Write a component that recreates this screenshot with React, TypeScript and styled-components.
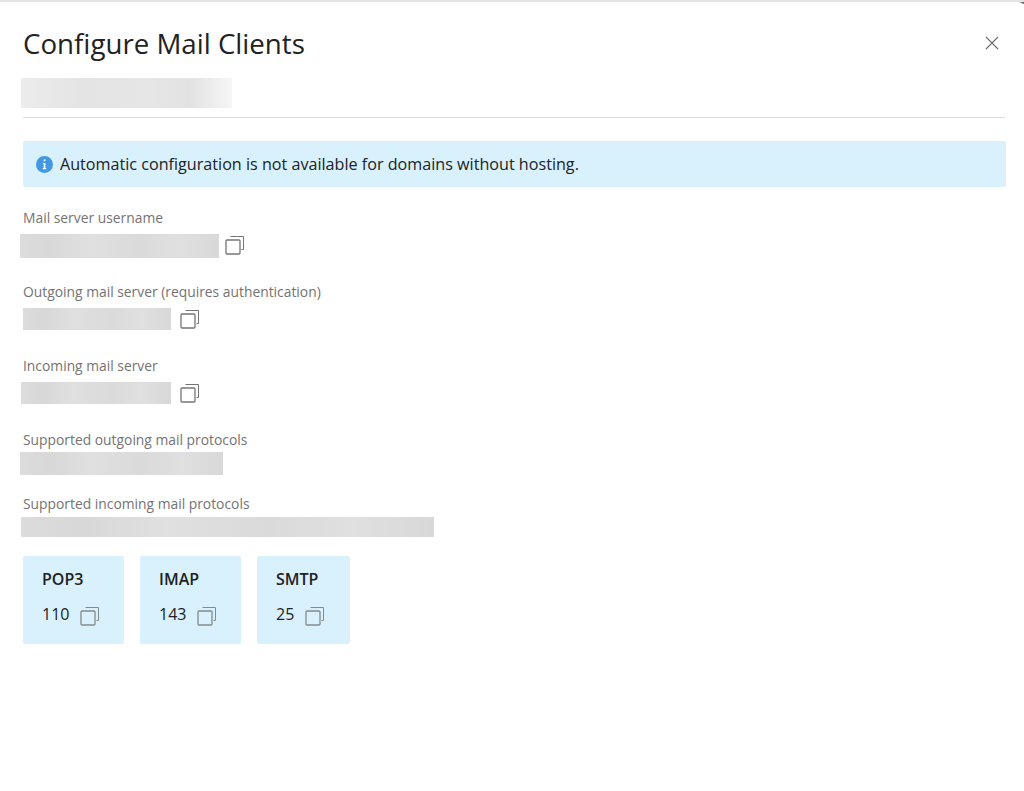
import React from 'react'
import styled, { createGlobalStyle } from 'styled-components'

const GlobalStyle = createGlobalStyle`
  html, body {
    margin: 0;
    padding: 0;
    background: #fff;
  }
  body {
    font-family: "Open Sans", "Liberation Sans", sans-serif;
    color: #222;
  }
`

const Dialog = styled.div`
  position: relative;
  box-sizing: border-box;
  width: 1024px;
  height: 791px;
  overflow: hidden;
  border-top: 2px solid #e4e4e4;
  padding: 0 18px 0 23px;
`

const Corner = styled.div`
  position: absolute;
  top: -1px;
  right: 0;
  width: 8px;
  height: 3px;
  background: linear-gradient(to right, #e4e4e4, #555);
  clip-path: polygon(0 0, 100% 0, 100% 100%);
`

const Title = styled.h1`
  margin: 0;
  padding-top: 21px;
  font-size: 27.7px;
  font-weight: 400;
  line-height: 40px;
  color: #222;
`

const CloseButton = styled.button`
  position: absolute;
  top: 34px;
  right: 25px;
  width: 14px;
  height: 14px;
  padding: 0;
  border: 0;
  background: none;
  display: flex;
  color: #6b6b6b;
`

const Masked = styled.div<{ $width: number; $height: number; $shift?: number; $light?: boolean }>`
  width: ${(p) => p.$width}px;
  height: ${(p) => p.$height}px;
  margin-left: ${(p) => p.$shift ?? 0}px;
  flex: none;
  background: ${(p) =>
    p.$light
      ? 'linear-gradient(90deg, #ececec 0%, #e4e4e4 30%, #e6e6e6 60%, #e2e2e2 80%, #f6f6f6 100%)'
      : 'linear-gradient(90deg, #dcdcdc 0%, #d8d8d8 15%, #e0e0e0 35%, #dadada 60%, #e0e0e0 80%, #d8d8d8 100%)'};
`

const Subject = styled.div`
  padding-top: 15px;
`

const Divider = styled.hr`
  margin: 9px 1px 0 0;
  border: 0;
  border-top: 1px solid #dcdcdc;
`

const Notice = styled.div`
  box-sizing: border-box;
  display: flex;
  align-items: center;
  gap: 7px;
  height: 46px;
  margin-top: 23px;
  padding-left: 13px;
  border-radius: 2px;
  background: #d8f1fd;
  font-size: 16.15px;
  color: #222;
`

const Field = styled.div<{ $top: number }>`
  margin-top: ${(p) => p.$top}px;
`

const Label = styled.div`
  font-size: 13.85px;
  line-height: 20px;
  color: #737373;
`

const ValueRow = styled.div<{ $top: number }>`
  display: flex;
  align-items: flex-start;
  gap: 6px;
  margin-top: ${(p) => p.$top}px;
`

const IconSlot = styled.span<{ $left?: number }>`
  display: flex;
  margin-left: ${(p) => p.$left ?? 0}px;
  margin-top: 1px;
  color: #757575;
`

const Ports = styled.div`
  display: flex;
  gap: 16px;
  margin-top: 19px;
`

const PortCard = styled.div<{ $width: number }>`
  box-sizing: border-box;
  width: ${(p) => p.$width}px;
  height: 88px;
  padding: 12px 0 0 19px;
  border-radius: 2px;
  background: #d8f1fd;
`

const PortName = styled.div`
  font-size: 16px;
  font-weight: 600;
  line-height: 22px;
  color: #222;
`

const PortValue = styled.div`
  display: flex;
  align-items: center;
  gap: 11px;
  margin-top: 13px;
  font-size: 16px;
  line-height: 22px;
  color: #222;

  svg {
    color: #858a8c;
    margin: 2px 0 -2px;
  }
`

const CopyIcon = () => (
  <svg width="20" height="20" viewBox="0 0 20 20" fill="none" stroke="currentColor">
    <path d="M5.5 1.5 H18.5 V14.5 H16.5" strokeWidth="1" />
    <rect x="1" y="5" width="14" height="14" rx="1" strokeWidth="1.3" />
  </svg>
)

const InfoIcon = () => (
  <svg width="17" height="17" viewBox="0 0 17 17">
    <circle cx="8.5" cy="8.5" r="8.5" fill="#4299e1" />
    <rect x="7.7" y="3.4" width="1.7" height="1.8" fill="#fff" />
    <path d="M6.9 7 H9.4 V12.1 H10.3 V13.2 H6.8 V12.1 H7.7 V8.1 H6.9 Z" fill="#fff" />
  </svg>
)

const CloseIcon = () => (
  <svg width="14" height="14" viewBox="0 0 14 14" stroke="currentColor" strokeWidth="1.1">
    <path d="M1 1 L13 13 M13 1 L1 13" />
  </svg>
)

const ports = [
  { name: 'POP3', port: 110, width: 101 },
  { name: 'IMAP', port: 143, width: 101 },
  { name: 'SMTP', port: 25, width: 92.5 }
]

const App = (): JSX.Element => (
  <>
    <GlobalStyle />
    <Dialog>
      <Corner />
      <Title>Configure Mail Clients</Title>
      <CloseButton aria-label='close'><CloseIcon /></CloseButton>
      <Subject><Masked $width={211} $height={30} $shift={-2} $light /></Subject>
      <Divider />
      <Notice><InfoIcon />Automatic configuration is not available for domains without hosting.</Notice>

      <Field $top={21}>
        <Label>Mail server username</Label>
        <ValueRow $top={6}>
          <Masked $width={199} $height={24} $shift={-3} />
          <IconSlot><CopyIcon /></IconSlot>
        </ValueRow>
      </Field>
      <Field $top={24}>
        <Label>Outgoing mail server (requires authentication)</Label>
        <ValueRow $top={6}>
          <Masked $width={148} $height={22} />
          <IconSlot $left={3}><CopyIcon /></IconSlot>
        </ValueRow>
      </Field>
      <Field $top={26}>
        <Label>Incoming mail server</Label>
        <ValueRow $top={6}>
          <Masked $width={150} $height={22} $shift={-2} />
          <IconSlot $left={3}><CopyIcon /></IconSlot>
        </ValueRow>
      </Field>
      <Field $top={26}>
        <Label>Supported outgoing mail protocols</Label>
        <ValueRow $top={2}>
          <Masked $width={203} $height={23} $shift={-3} />
        </ValueRow>
      </Field>
      <Field $top={19}>
        <Label>Supported incoming mail protocols</Label>
        <ValueRow $top={3}>
          <Masked $width={412.5} $height={20} $shift={-2} />
        </ValueRow>
      </Field>

      <Ports>
        {ports.map((item) => (
          <PortCard key={item.name} $width={item.width}>
            <PortName>{item.name}</PortName>
            <PortValue>{item.port}<CopyIcon /></PortValue>
          </PortCard>
        ))}
      </Ports>
    </Dialog>
  </>
)

export default App
